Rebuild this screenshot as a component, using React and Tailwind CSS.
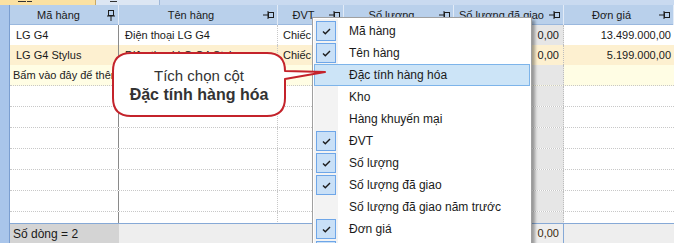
import React from "react";

const Pin = ({ vertical }) =>
  vertical ? (
    <svg width="8" height="11" viewBox="0 0 8 11" className="shrink-0">
      <rect x="1.5" y="0.5" width="5" height="5" fill="none" stroke="#1e1e1e" />
      <line x1="0" y1="6" x2="8" y2="6" stroke="#1e1e1e" />
      <line x1="4" y1="6" x2="4" y2="11" stroke="#1e1e1e" />
    </svg>
  ) : (
    <svg width="11" height="8" viewBox="0 0 11 8" className="shrink-0">
      <line x1="0" y1="4" x2="5" y2="4" stroke="#1e1e1e" />
      <line x1="5" y1="0" x2="5" y2="8" stroke="#1e1e1e" />
      <rect x="5.5" y="1.5" width="5" height="5" fill="none" stroke="#1e1e1e" />
    </svg>
  );

const Check = () => (
  <svg width="9" height="7" viewBox="0 0 9 7">
    <path d="M1 3.5 L3.3 5.8 L8 1" fill="none" stroke="#1c1c1c" strokeWidth="1.4" />
  </svg>
);

const headers = ["Mã hàng", "Tên hàng", "ĐVT", "Số lượng", "Số lượng đã giao", "Đơn giá"];

const menuItems = [
  { t: "Mã hàng", c: true },
  { t: "Tên hàng", c: true },
  { t: "Đặc tính hàng hóa", c: false, h: true },
  { t: "Kho", c: false },
  { t: "Hàng khuyến mại", c: false },
  { t: "ĐVT", c: true },
  { t: "Số lượng", c: true },
  { t: "Số lượng đã giao", c: true },
  { t: "Số lượng đã giao năm trước", c: false },
  { t: "Đơn giá", c: true },
  { t: "", c: true },
];

const Cell = ({ children, className = "" }) => (
  <div className={"h-[20px] flex items-center overflow-hidden whitespace-nowrap " + className}>{children}</div>
);

export default function App() {
  const emptyRows = Array.from({ length: 8 });
  return (
    <div className="relative w-[674px] h-[243px] overflow-hidden bg-[#c9daf0] font-['Liberation_Sans',Arial,sans-serif] text-[11px] text-[#1a1a1a]">
      {/* tab strip */}
      <div className="h-[5px] flex bg-[#c9daf0]">
        <div className="w-[96px] h-full bg-[#fbe1a2] border-r border-[#c7a865] relative">
          <div className="absolute left-[18px] top-[1px] w-[8px] h-[1px] bg-[#333]" />
          <div className="absolute left-[27px] top-[1px] w-[5px] h-[1px] bg-[#333]" />
        </div>
        <div className="w-[64px] h-full bg-[#dce6f3] border-r border-[#9fb8d9] relative">
          <div className="absolute left-[14px] top-[1px] w-[7px] h-[1px] bg-[#333]" />
        </div>
      </div>

      <div className="flex h-[238px]">
        {/* left strip */}
        <div className="w-[10px] h-full bg-[#a9c5ea] border-r border-[#7b9ed0]" />

        {/* grid */}
        <div className="flex-1 flex flex-col bg-white">
          {/* header */}
          <div className="grid grid-cols-[109px_159px_66px_110px_110px_110px] h-[20px] bg-[#b9d0eb] border-b border-[#9ab8de]">
            {headers.map((h, i) => (
              <div key={h} className="flex items-center h-[20px] pr-[3px] border-r border-[#e2ebf7]">
                <span className="flex-1 text-center whitespace-nowrap overflow-hidden">{h}</span>
                <Pin vertical={i === 0} />
              </div>
            ))}
          </div>

          {/* body */}
          <div className="h-[204px] overflow-hidden">
            <div className="grid grid-cols-[109px_159px_66px_110px_110px_110px] bg-white">
              <Cell className="pl-[6px] border-r border-[#8a8a8a]">LG G4</Cell>
              <Cell className="pl-[6px] border-r border-dotted border-[#c8c8c8]">Điện thoại LG G4</Cell>
              <Cell className="pl-[5px] border-r border-dotted border-[#c8c8c8]">Chiếc</Cell>
              <Cell className="justify-end pr-[4px] border-r border-dotted border-[#c8c8c8]">1,00</Cell>
              <Cell className="justify-end pr-[4px] bg-[#e6e6e6] border-r border-dotted border-[#bdbdbd]">0,00</Cell>
              <Cell className="justify-end pr-[3px]">13.499.000,00</Cell>
            </div>
            <div className="grid grid-cols-[109px_159px_66px_110px_110px_110px] bg-[#fdf0d0]">
              <Cell className="pl-[6px] border-r border-[#8a8a8a]">LG G4 Stylus</Cell>
              <Cell className="pl-[6px] border-r border-dotted border-[#c8c8c8]">Điện thoại LG G4 Stylus</Cell>
              <Cell className="pl-[5px] border-r border-dotted border-[#c8c8c8]">Chiếc</Cell>
              <Cell className="justify-end pr-[4px] border-r border-dotted border-[#c8c8c8]">1,00</Cell>
              <Cell className="justify-end pr-[4px] border-r border-dotted border-[#bdbdbd]">0,00</Cell>
              <Cell className="justify-end pr-[3px]">5.199.000,00</Cell>
            </div>
            <div className="grid grid-cols-[109px_159px_66px_110px_110px_110px] bg-[#fffde4] border-b border-dotted border-[#c8c8c8]">
              <Cell className="col-span-4 pl-[3px] text-[#222]">Bấm vào đây để thêm dòng mới</Cell>
              <Cell className="bg-[#e6e6e6] border-r border-dotted border-[#bdbdbd]" />
              <Cell />
            </div>
            {emptyRows.map((_, r) => (
              <div key={r} className="grid grid-cols-[109px_159px_66px_110px_110px_110px] border-b border-dotted border-[#c8c8c8]">
                <Cell className="border-r border-[#8a8a8a]" />
                <Cell className="border-r border-dotted border-[#c8c8c8]" />
                <Cell className="border-r border-dotted border-[#c8c8c8]" />
                <Cell className="border-r border-dotted border-[#c8c8c8]" />
                <Cell className="bg-[#e6e6e6] border-r border-dotted border-[#bdbdbd]" />
                <Cell />
              </div>
            ))}
          </div>

          {/* footer */}
          <div className="grid grid-cols-[109px_159px_66px_110px_110px_110px] h-[20px] bg-[#eeeeee] border-t border-[#86a9d6] text-[12px]">
            <Cell className="pl-[3px] bg-[#d4d4d4] items-start pt-[1px]">Số dòng = 2</Cell>
            <Cell />
            <Cell />
            <Cell />
            <Cell className="justify-end pr-[4px] items-start pt-[1px] text-[11px] text-[#3a2a10] border-r border-[#86a9d6]">0,00</Cell>
            <Cell />
          </div>
        </div>
      </div>

      {/* context menu */}
      <div className="absolute left-[312px] top-[17px] w-[220px] h-[260px] bg-white border border-[#a0a0a0] shadow-[3px_3px_3px_rgba(0,0,0,0.35)] p-[1px]">
        <div className="absolute left-[1px] top-[1px] bottom-[1px] w-[24px] bg-[#f3f3f3]" />
        <div className="relative flex flex-col pt-[1px]">
          {menuItems.map((m, i) => (
            <div
              key={i}
              className={
                "h-[22px] flex items-center text-[12px] text-[#1a1a1a] border " +
                (m.h ? "bg-[#cce4f7] border-[#7db4ea]" : "border-transparent")
              }
            >
              <div className="w-[22px] flex items-center justify-center">
                {m.c && (
                  <div className="w-[20px] h-[20px] bg-[#c9e0f7] border border-[#6ea6e8] flex items-center justify-center">
                    <Check />
                  </div>
                )}
              </div>
              {m.t && <span className="ml-[12px] whitespace-nowrap">{m.t}</span>}
            </div>
          ))}
        </div>
      </div>

      {/* callout */}
      <svg className="absolute left-0 top-0" width="674" height="243" viewBox="0 0 674 243">
        <path
          d="M131 53 H267 Q285 53 285 71 L325 72 L285 79 V98 Q285 116 267 116 H131 Q113 116 113 98 V71 Q113 53 131 53 Z"
          fill="white"
          stroke="#c4232b"
          strokeWidth="2"
          strokeLinejoin="round"
        />
      </svg>
      <div className="absolute left-[113px] top-[53px] w-[172px] h-[63px] flex flex-col items-center justify-center text-[15px] leading-[19px] text-[#333]">
        <span>Tích chọn cột</span>
        <span className="font-bold text-[16px]">Đặc tính hàng hóa</span>
      </div>
    </div>
  );
}
